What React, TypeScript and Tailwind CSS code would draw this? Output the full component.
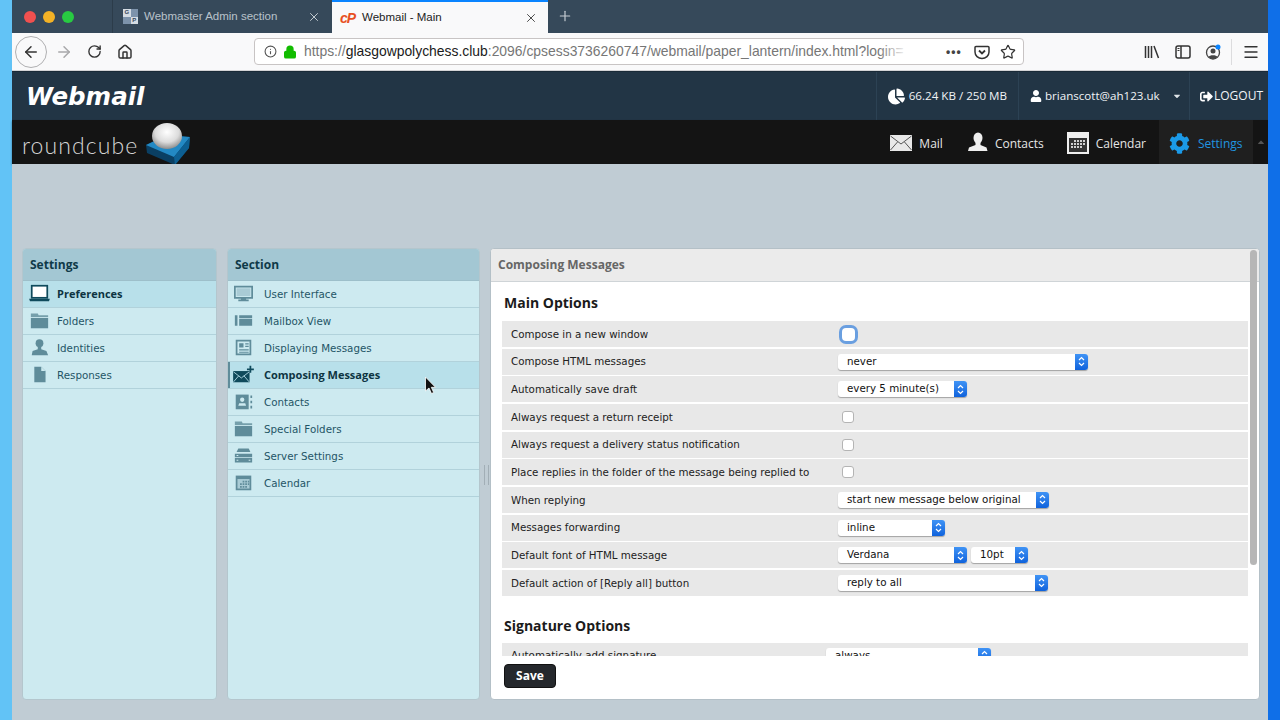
import { FaChartPie, FaUser, FaSignOutAlt, FaCog, FaCaretDown, FaCaretUp } from 'react-icons/fa';
import { ArrowLeft, ArrowRight, RotateCw, Home, Info, Lock, Star, X, Plus, Menu } from 'lucide-react';

const lucida = "[font-family:'DejaVu_Sans',sans-serif]";
const heading = "[font-family:'Open_Sans',sans-serif]";

const settingsItems = [
  { label: 'Preferences', icon: 'laptop', active: true },
  { label: 'Folders', icon: 'folder' },
  { label: 'Identities', icon: 'person' },
  { label: 'Responses', icon: 'doc' },
];

const sectionItems = [
  { label: 'User Interface', icon: 'monitor' },
  { label: 'Mailbox View', icon: 'mailbox' },
  { label: 'Displaying Messages', icon: 'news' },
  { label: 'Composing Messages', icon: 'compose', active: true },
  { label: 'Contacts', icon: 'contacts' },
  { label: 'Special Folders', icon: 'folder' },
  { label: 'Server Settings', icon: 'server' },
  { label: 'Calendar', icon: 'calendar' },
];

const optionRows = [
  { label: 'Compose in a new window', check: 'focus' },
  { label: 'Compose HTML messages', selects: [{ text: 'never', w: 'w-[250px]' }] },
  { label: 'Automatically save draft', selects: [{ text: 'every 5 minute(s)', w: 'w-[129px]' }] },
  { label: 'Always request a return receipt', check: 'plain' },
  { label: 'Always request a delivery status notification', check: 'plain' },
  { label: 'Place replies in the folder of the message being replied to', check: 'plain' },
  { label: 'When replying', selects: [{ text: 'start new message below original', w: 'w-[211px]' }] },
  { label: 'Messages forwarding', selects: [{ text: 'inline', w: 'w-[107px]' }] },
  { label: 'Default font of HTML message', selects: [{ text: 'Verdana', w: 'w-[129px]' }, { text: '10pt', w: 'w-[57px]' }] },
  { label: 'Default action of [Reply all] button', selects: [{ text: 'reply to all', w: 'w-[210px]' }] },
];

function SideIcon({ name, active }: { name: string; active?: boolean }) {
  const c = active ? '#0f4a5c' : '#5f8c9a';
  const common = { width: 23, height: 19, viewBox: '0 0 26 22', fill: c };
  if (name === 'laptop')
    return (
      <svg {...common}>
        <path d="M3 1h20v16H3z" fill="#0f4a5c" />
        <path d="M5 3h16v12H5z" fill="#fff" />
        <path d="M1 17h24l-1 3H2z" fill="#0f4a5c" />
      </svg>
    );
  if (name === 'folder')
    return (
      <svg {...common}>
        <path d="M3 3h8l1 2h11v2H3z" opacity=".8" />
        <path d="M3 8h20v12H3z" />
      </svg>
    );
  if (name === 'person')
    return (
      <svg {...common}>
        <circle cx="13" cy="6" r="4.500" />
        <path d="M11 10h4v3l6 2 2 5H4l1-5 6-2z" />
      </svg>
    );
  if (name === 'doc')
    return (
      <svg {...common}>
        <path d="M7 2h8l5 5v13H7z" />
        <path d="M15 2v5h5z" fill="#cdeaf0" />
      </svg>
    );
  if (name === 'monitor')
    return (
      <svg {...common}>
        <path d="M3 3h20v13H3z" fill="none" stroke={c} strokeWidth="2" />
        <path d="M5 5h16v9H5z" fill="#a9cbd5" />
        <path d="M10 16h6v2h3v2H7v-2h3z" />
      </svg>
    );
  if (name === 'mailbox')
    return (
      <svg {...common}>
        <path d="M3 5h3v12H3zM8 5h15v3H8zM8 9h15v8H8z" />
      </svg>
    );
  if (name === 'news')
    return (
      <svg {...common}>
        <path d="M5 3h16v16H5z" fill="none" stroke={c} strokeWidth="2" />
        <path d="M8 6h5v5H8zM15 6h4v1.500h-4zM15 9h4v1.500h-4zM8 13h11v1.500H8zM8 16h11v1H8z" />
      </svg>
    );
  if (name === 'compose')
    return (
      <svg {...common}>
        <path d="M1 7h19v13H1z" fill="#0f4a5c" />
        <path d="M1.500 8l9 7 9-7M1.500 19.500l6-7M19.500 19.500l-6-7" fill="none" stroke="#b8e0ea" strokeWidth="1" />
        <path d="M20 1h2v3h3v2h-3v3h-2V6h-3V4h3z" fill="#0f4a5c" />
      </svg>
    );
  if (name === 'contacts')
    return (
      <svg {...common}>
        <path d="M4 3h15v17H4z" />
        <circle cx="11.500" cy="9" r="2.500" fill="#cdeaf0" />
        <path d="M7 16l1-3h7l1 3z" fill="#cdeaf0" />
        <path d="M21 4h2v3h-2zM21 10h2v3h-2zM21 16h2v3h-2z" />
      </svg>
    );
  if (name === 'server')
    return (
      <svg {...common}>
        <path d="M7 3h12l2 4H5z" />
        <path d="M3 9h20v4H3zM3 14h20v5H3z" />
        <path d="M5 10.500h2v1H5zM5 16h2v1H5zM19 16h2v1h-2z" fill="#cdeaf0" />
      </svg>
    );
  return (
    <svg {...common}>
      <path d="M4 3h18v17H4z" />
      <path d="M6 7h14v11H6z" fill="#a9cbd5" />
      <path d="M12 9h2v2h-2zM15 9h2v2h-2zM18 9h1.500v2H18zM9 12h2v2H9zM12 12h2v2h-2zM15 12h2v2h-2zM18 12h1.500v2H18zM9 15h2v2H9zM12 15h2v2h-2zM15 15h2v2h-2z" />
    </svg>
  );
}

function ListPanel({ title, items, width, iconCol }: { title: string; items: { label: string; icon: string; active?: boolean }[]; width: string; iconCol: string }) {
  return (
    <div className={`${width} h-[452px] shrink-0 rounded-[4px] bg-[#cdeaf0] overflow-hidden border border-[#b4c6cd]`}>
      <div className={`h-[32px] flex items-center pl-[7px] bg-[#a3c7d3] border-b border-[#9dbfca] text-[12px] font-bold text-[#0f3a48] ${heading}`}>{title}</div>
      {items.map((item) => (
        <div
          key={item.label}
          className={`relative h-[27px] flex items-center border-b border-[#b1d2db] ${
            item.active ? `bg-[#b8e0ea] text-[11px] font-bold text-[#0d3442] ${heading}` : `text-[10.300px] text-[#1f5566] ${lucida}`
          }`}
        >
          {item.active && title === 'Section' && <span className="absolute left-0 top-0 bottom-0 w-[2px] bg-[#5f8c9a]" />}
          <span className={`${iconCol} flex justify-center shrink-0 mt-[-1px]`}>
            <SideIcon name={item.icon} active={item.active} />
          </span>
          <span className="mt-[1px]">{item.label}</span>
        </div>
      ))}
    </div>
  );
}

function FakeSelect({ text, w }: { text: string; w: string }) {
  return (
    <div className={`${w} h-[16px] flex items-stretch rounded-[3px] bg-white shadow-[0_1px_1px_rgba(0,0,0,0.3)] overflow-hidden`}>
      <span className={`flex-1 pl-[9px] text-[10.300px] leading-[15px] text-[#111] whitespace-nowrap ${lucida}`}>{text}</span>
      <span className="w-[13px] flex items-center justify-center bg-gradient-to-b from-[#3f93f5] to-[#0e62dc]">
        <svg width="7" height="11" viewBox="0 0 7 11" fill="none" stroke="#fff" strokeWidth="1.200">
          <path d="M1 4l2.500-2.500L6 4M1 7l2.500 2.500L6 7" />
        </svg>
      </span>
    </div>
  );
}

function Checkbox({ focus }: { focus?: boolean }) {
  return focus ? (
    <span className="ml-[4px] block w-[13px] h-[13px] rounded-[4px] bg-white ring-[3px] ring-[#6a9fe0]" />
  ) : (
    <span className="ml-[4px] block w-[12px] h-[12px] rounded-[3px] bg-white border border-[#b4b4b4]" />
  );
}

export default function App() {
  return (
    <div className="relative w-[1280px] h-[720px] flex overflow-hidden bg-[#c0ccd4]">
      <div className="w-[12px] shrink-0 bg-[#62c3f6]" />
      <div className="w-[1256px] shrink-0 flex flex-col">
        {/* browser tabs */}
        <div className="h-[33px] shrink-0 flex bg-[#36495a] text-[11.500px] [font-family:'Liberation_Sans',sans-serif]">
          <div className="w-[101px] flex items-center gap-[7px] pl-[12px] border-r border-[#2c3c4a]">
            <span className="w-[12px] h-[12px] rounded-full bg-[#f0504f]" />
            <span className="w-[12px] h-[12px] rounded-full bg-[#f3b226]" />
            <span className="w-[12px] h-[12px] rounded-full bg-[#28ca42]" />
          </div>
          <div className="w-[219px] flex items-center pl-[10px] text-[#b9c2ca]">
            <span className="w-[15px] h-[15px] mr-[6px] grid grid-cols-2 grid-rows-2 text-[6px] font-bold leading-[7px] text-center text-[#36495a]">
              <span className="bg-[#d5dce3]">G</span>
              <span className="bg-[#7d93ab]" />
              <span className="bg-[#7d93ab]" />
              <span className="bg-[#d5dce3]">P</span>
            </span>
            Webmaster Admin section
            <X className="ml-auto mr-[11px] w-[14px] h-[14px] text-[#d5dbe0]" strokeWidth={1.500} />
          </div>
          <div className="w-[216px] flex items-center pl-[8px] bg-[#f9f9fa] border-t-2 border-[#0a84ff] text-[#222]">
            <span className="w-[16px] mr-[6px] text-[14px] font-bold italic text-[#e8501f] leading-none tracking-[-1px]">cP</span>
            Webmail - Main
            <X className="ml-auto mr-[10px] w-[14px] h-[14px] text-[#333]" strokeWidth={1.500} />
          </div>
          <Plus className="ml-[9px] mt-[8px] w-[16px] h-[16px] text-[#c5ccd2]" strokeWidth={1.800} />
        </div>

        {/* browser toolbar */}
        <div className="h-[38px] shrink-0 flex items-center bg-[#f9f9fa] border-b border-[#d4d4d6] text-[#333]">
          <div className="ml-[3px] w-[32px] h-[32px] rounded-full border border-[#b0b0b2] flex items-center justify-center">
            <ArrowLeft className="w-[18px] h-[18px]" strokeWidth={2} />
          </div>
          <ArrowRight className="ml-[8px] w-[18px] h-[18px] text-[#a8a8aa]" strokeWidth={2} />
          <RotateCw className="ml-[14px] w-[15px] h-[15px]" strokeWidth={2.200} />
          <Home className="ml-[15px] w-[16px] h-[16px]" strokeWidth={2.200} />
          <div className="relative ml-[121px] w-[770px] h-[27px] flex items-center rounded-[4px] bg-white border border-[#c8c4c4] text-[13.900px] [font-family:'Liberation_Sans',sans-serif] overflow-hidden">
            <Info className="ml-[9px] w-[13px] h-[13px] text-[#555]" strokeWidth={2} />
            <Lock className="ml-[6px] w-[14px] h-[14px] text-[#12bc00] fill-[#12bc00]" strokeWidth={2.500} />
            <span className="relative ml-[7px] w-[604px] whitespace-nowrap overflow-hidden text-[#767676]">
              https://<span className="text-[#1a1a1a]">glasgowpolychess.club</span>:2096/cpsess3736260747/webmail/paper_lantern/index.html?login=
              <span className="absolute right-0 top-0 bottom-0 w-[30px] bg-gradient-to-r from-transparent to-white" />
            </span>
            <span className="ml-[38px] text-[12px] font-bold leading-none tracking-[1px] text-[#444]">•••</span>
            <svg className="ml-[12px]" width="16" height="16" viewBox="0 0 16 16" fill="none" stroke="#333" strokeWidth="1.500">
              <path d="M2 2.500h12a1 1 0 0 1 1 1V8a7 6.500 0 0 1-14 0V3.500a1 1 0 0 1 1-1z" />
              <path d="M5 6.500l3 3 3-3" strokeWidth="1.800" />
            </svg>
            <Star className="ml-[10px] w-[16px] h-[16px] text-[#333]" strokeWidth={1.800} />
          </div>
          <svg className="ml-[120px]" width="16" height="14" viewBox="0 0 16 14" fill="none" stroke="#333" strokeWidth="1.500">
            <path d="M1.500 1v12M4.500 1v12M7.500 1v12M10 1l4.500 12" />
          </svg>
          <svg className="ml-[15px]" width="16" height="14" viewBox="0 0 16 14" fill="none" stroke="#333" strokeWidth="1.500">
            <rect x="1" y="1" width="14" height="12" rx="2" />
            <path d="M6 1v12" />
            <path d="M2.500 3.500h2M2.500 5.500h2" strokeWidth="1" />
          </svg>
          <svg className="ml-[14px]" width="16" height="16" viewBox="0 0 16 16">
            <circle cx="8" cy="8.500" r="6.500" fill="none" stroke="#444" strokeWidth="1.300" />
            <circle cx="8" cy="7" r="2.500" fill="#444" />
            <path d="M3.500 13c1-2.500 8-2.500 9 0a6 6 0 0 1-9 0z" fill="#444" />
            <circle cx="13" cy="3" r="2.500" fill="#0a84ff" />
          </svg>
          <div className="ml-[10px] w-px h-[26px] bg-[#dcdcde]" />
          <Menu className="ml-[10px] w-[18px] h-[18px]" strokeWidth={1.800} />
        </div>

        {/* webmail header */}
        <div className="h-[49px] shrink-0 flex items-center bg-[#223545] border-t border-[#1a2a37] text-[11.600px] text-[#f0f3f5] [font-family:'Open_Sans',sans-serif]">
          <span className="ml-[14px] mt-[3px] text-[24.500px] leading-none font-bold italic text-white [font-family:'DejaVu_Sans',sans-serif]">Webmail</span>
          <div className="ml-auto h-full flex items-center border-l border-[#2c4254] pl-[11px] pr-[11px]">
            <FaChartPie className="w-[17px] h-[17px] mr-[4px] text-white" />
            66.24 KB / 250 MB
          </div>
          <div className="h-full flex items-center border-l border-[#2c4254] pl-[11px] w-[171px]">
            <FaUser className="w-[12px] h-[12px] mr-[3px] text-white" />
            brianscott@ah123.uk
            <FaCaretDown className="ml-[12px] w-[10px] h-[10px] text-[#dfe4e8]" />
          </div>
          <div className="h-full flex items-center border-l border-[#2c4254] pl-[10px] pr-[5px] text-[12px]">
            <FaSignOutAlt className="w-[13px] h-[13px] mr-[1px] text-white" />
            LOGOUT
          </div>
        </div>

        {/* roundcube nav */}
        <div className="h-[44px] shrink-0 flex items-center bg-[#141414] text-[12px] text-[#e6e6e6] [font-family:'Open_Sans',sans-serif] shadow-[0_1px_2px_rgba(0,0,0,0.4)]">
          <span className="ml-[10px] mt-[6px] text-[23px] font-light tracking-[1.100px] text-[#d5d5d5] [font-family:'Lato',sans-serif]">roundcube</span>
          <svg className="ml-[7px] overflow-visible" width="46" height="44" viewBox="0 0 46 44">
            <defs>
              <radialGradient id="ball" cx="50%" cy="35%" r="65%">
                <stop offset="0%" stopColor="#ffffff" />
                <stop offset="60%" stopColor="#dcdcdc" />
                <stop offset="100%" stopColor="#8d8d8d" />
              </radialGradient>
            </defs>
            <path d="M1 25l21-10 23 2-1 11-14 17L2 33z" fill="#0a3f63" />
            <path d="M1 25l21-10 23 2-16 20z" fill="#2389c4" />
            <path d="M29 37l16-20-1 11-14 17z" fill="#0d5f92" />
            <ellipse cx="22" cy="16" rx="15" ry="13" fill="url(#ball)" />
          </svg>
          <div className="ml-auto flex items-center">
            <svg className="mt-[2px]" width="22" height="16" viewBox="0 0 22 16">
              <path d="M0 0h22v16H0z" fill="#e8e8e8" />
              <path d="M0.500 1l10.500 8 10.500-8M0.500 15l7-8M21.500 15l-7-8" fill="none" stroke="#555" strokeWidth="1" />
            </svg>
            <span className="ml-[7px] mt-[3px]">Mail</span>
            <svg className="ml-[25px] mt-[-1px]" width="20" height="20" viewBox="0 0 20 20" fill="#efefef">
              <ellipse cx="10" cy="6" rx="4.500" ry="5.500" />
              <path d="M7.500 10h5v3l6 2.500 1 3.500H0l1-3.500 6.500-2.500z" />
            </svg>
            <span className="ml-[7px] mt-[3px]">Contacts</span>
            <svg className="ml-[23px] mt-[1px]" width="22" height="22" viewBox="0 0 22 22">
              <path d="M0 0h22v22H0z" fill="#efefef" />
              <path d="M2 6h18v14H2z" fill="#333" />
              <path d="M7 8h2v2H7zM10 8h2v2h-2zM13 8h2v2h-2zM16 8h2v2h-2zM4 11h2v2H4zM7 11h2v2H7zM10 11h2v2h-2zM13 11h2v2h-2zM16 11h2v2h-2zM4 14h2v2H4zM7 14h2v2H7zM10 14h2v2h-2zM13 14h2v2h-2z" fill="#cfcfcf" />
            </svg>
            <span className="ml-[7px] mt-[3px] mr-[13px]">Calendar</span>
            <div className="h-[44px] w-[94px] flex items-center bg-[#1f1f1f] pl-[10px] text-[#2196e0]">
              <FaCog className="mt-[2px] w-[21px] h-[21px] text-[#1b9ae8]" />
              <span className="ml-[8px] mt-[3px]">Settings</span>
            </div>
            <div className="w-[15px] flex justify-center">
              <FaCaretUp className="w-[10px] h-[10px] text-[#555]" />
            </div>
          </div>
        </div>

        {/* page content */}
        <div className="flex-1 min-h-0 flex gap-[10px] pl-[10px] pt-[84px] bg-[#c0ccd4]">
          <ListPanel title="Settings" items={settingsItems} width="w-[195px]" iconCol="w-[34px] pr-[1px]" />
          <div className="w-[253px] shrink-0 relative">
            <ListPanel title="Section" items={sectionItems} width="w-[253px]" iconCol="w-[36px] pr-[5px]" />
            <span className="absolute right-[-9px] top-[217px] w-[5px] h-[20px] border-x border-[#a2aeb6]" />
          </div>
          <div className="relative w-[770px] h-[452px] shrink-0 rounded-[4px] bg-white border border-[#b4c0c7] overflow-hidden flex flex-col">
            <div className={`h-[33px] shrink-0 flex items-center pl-[7px] bg-[#ebebeb] border-b border-[#cfd4d7] text-[12px] font-bold text-[#666] ${heading}`}>Composing Messages</div>
            <div className={`h-[374px] shrink-0 overflow-hidden pl-[11px] pr-[11px] ${lucida}`}>
              <h3 className={`mt-[12px] h-[18px] pl-[2px] text-[14px] leading-[18px] font-bold text-[#1b1b1b] ${heading}`}>Main Options</h3>
              <div className="mt-[9px] flex flex-col gap-[1.670px]">
                {optionRows.map((row) => (
                  <div key={row.label} className="h-[26px] shrink-0 flex items-center bg-[#e8e8e8] text-[10.300px] text-[#222]">
                    <span className="w-[336px] pl-[9px] shrink-0 whitespace-nowrap mt-[1px]">{row.label}</span>
                    {row.check && <Checkbox focus={row.check === 'focus'} />}
                    {row.selects && (
                      <div className="flex gap-[4px]">
                        {row.selects.map((s) => (
                          <FakeSelect key={s.text} text={s.text} w={s.w} />
                        ))}
                      </div>
                    )}
                  </div>
                ))}
              </div>
              <h3 className={`mt-[21px] h-[18px] pl-[2px] text-[14px] leading-[18px] font-bold text-[#1b1b1b] ${heading}`}>Signature Options</h3>
              <div className="mt-[8px] h-[26px] flex items-center bg-[#e8e8e8] text-[10.300px] text-[#222]">
                <span className="w-[324px] pl-[9px] shrink-0">Automatically add signature</span>
                <FakeSelect text="always" w="w-[165px]" />
              </div>
            </div>
            <div className="pl-[13px] pt-[8px]">
              <button className={`block w-[52px] h-[24px] rounded-[4px] bg-[#25282c] border border-[#111] text-[12px] font-bold text-white ${heading}`}>Save</button>
            </div>
            <div className="absolute right-[2px] top-[1px] w-[7px] h-[315px] rounded-full bg-[#b6b6b6]" />
          </div>
        </div>
      </div>
      <div className="w-[12px] shrink-0 bg-[#0f6fe8]" />
      {/* mouse pointer */}
      <svg className="absolute left-[424px] top-[376px]" width="13" height="19" viewBox="0 0 13 19">
        <path d="M1.500 1v14l3.500-3 2.500 5.500 2.200-1-2.400-5.200H11.500z" fill="#111" stroke="#fff" strokeWidth="0.800" />
      </svg>
    </div>
  );
}
